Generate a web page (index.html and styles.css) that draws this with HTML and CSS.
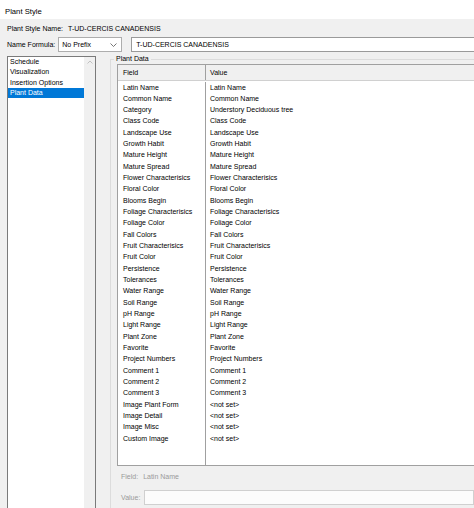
FILE: index.html
```html
<!DOCTYPE html>
<html lang="en">
<head>
    <meta charset="UTF-8">
    <meta name="viewport" content="width=device-width, initial-scale=1.0">
    <title>Plant Style</title>
    <link rel="stylesheet" href="styles.css">
</head>
<body>
    <div class="titlebar">Plant Style</div>

    <div class="dialog">
        <div class="name-row">
            <span>Plant Style Name:</span>
            <span class="name-value">T-UD-CERCIS CANADENSIS</span>
        </div>

        <div class="formula-row">
            <label for="formula">Name Formula:</label>
            <div class="combo" id="formula">
                <span>No Prefix</span>
                <svg width="7" height="4" viewBox="0 0 7 4"><polyline points="0.5,0.5 3.5,3.5 6.5,0.5" fill="none" stroke="#555" stroke-width="0.8"/></svg>
            </div>
            <div class="textbox">T-UD-CERCIS CANADENSIS</div>
        </div>

        <div class="main">
            <div class="listbox">
                <ul class="list">
                    <li>Schedule</li>
                    <li>Visualization</li>
                    <li>Insertion Options</li>
                    <li class="selected">Plant Data</li>
                </ul>
                <div class="scrollbar">
                    <svg width="6" height="4" viewBox="0 0 6 4"><polyline points="0.5,3.5 3,1 5.5,3.5" fill="none" stroke="#b5b5b5" stroke-width="0.8"/></svg>
                </div>
            </div>

            <fieldset class="group">
                <legend>Plant Data</legend>

                <div class="grid">
                    <div class="grid-head">
                        <div class="col-field">Field</div>
                        <div class="col-value">Value</div>
                    </div>
                    <div class="grid-body">
                        <div class="col-field" id="fields"></div>
                        <div class="col-value" id="values"></div>
                    </div>
                </div>

                <div class="detail">Field:<span class="detail-value">Latin Name</span></div>
                <div class="value-row">
                    <span>Value:</span>
                    <div class="textbox disabled"></div>
                </div>
            </fieldset>
        </div>
    </div>

    <script>
        const rows = [
            ['Latin Name', 'Latin Name'],
            ['Common Name', 'Common Name'],
            ['Category', 'Understory Deciduous tree'],
            ['Class Code', 'Class Code'],
            ['Landscape Use', 'Landscape Use'],
            ['Growth Habit', 'Growth Habit'],
            ['Mature Height', 'Mature Height'],
            ['Mature Spread', 'Mature Spread'],
            ['Flower Characterisics', 'Flower Characterisics'],
            ['Floral Color', 'Floral Color'],
            ['Blooms Begin', 'Blooms Begin'],
            ['Foliage Characterisics', 'Foliage Characterisics'],
            ['Foliage Color', 'Foliage Color'],
            ['Fall Colors', 'Fall Colors'],
            ['Fruit Characterisics', 'Fruit Characterisics'],
            ['Fruit Color', 'Fruit Color'],
            ['Persistence', 'Persistence'],
            ['Tolerances', 'Tolerances'],
            ['Water Range', 'Water Range'],
            ['Soil Range', 'Soil Range'],
            ['pH Range', 'pH Range'],
            ['Light Range', 'Light Range'],
            ['Plant Zone', 'Plant Zone'],
            ['Favorite', 'Favorite'],
            ['Project Numbers', 'Project Numbers'],
            ['Comment 1', 'Comment 1'],
            ['Comment 2', 'Comment 2'],
            ['Comment 3', 'Comment 3'],
            ['Image Plant Form', '<not set>'],
            ['Image Detail', '<not set>'],
            ['Image Misc', '<not set>'],
            ['Custom Image', '<not set>']
        ];

        const fields = document.getElementById('fields');
        const values = document.getElementById('values');
        rows.forEach(function (row) {
            const f = document.createElement('div');
            f.className = 'cell';
            f.textContent = row[0];
            fields.appendChild(f);

            const v = document.createElement('div');
            v.className = 'cell';
            v.textContent = row[1];
            values.appendChild(v);
        });
    </script>
</body>
</html>
```

FILE: styles.css
```css
body {
    margin: 0;
    width: 474px;
    height: 508px;
    overflow: hidden;
    background-color: #f0f0f0;
    font-family: "Liberation Sans", Arial, sans-serif;
    font-size: 7px;
    color: #000;
}
.titlebar {
    background-color: #fff;
    height: 17px;
    padding: 3px 0 0 5px;
    line-height: 17px;
    font-size: 7.7px;
    height: 16px;
}
.dialog {
    padding-left: 7px;
}
.name-row {
    margin-top: 4px;
    height: 12px;
    line-height: 12px;
    display: flex;
    white-space: nowrap;
}
.name-value {
    margin-left: 5px;
}
.formula-row {
    margin-top: 2px;
    height: 15px;
    display: flex;
    align-items: center;
    white-space: nowrap;
}
.formula-row label {
    flex: none;
}
.combo {
    flex: none;
    margin-left: 3px;
    width: 64px;
    height: 15px;
    box-sizing: border-box;
    border: 1px solid #adadad;
    background-color: #fff;
    padding: 0 4px 0 3px;
    display: flex;
    align-items: center;
    justify-content: space-between;
}
.textbox {
    flex: none;
    height: 15px;
    box-sizing: border-box;
    border: 1px solid #9a9a9a;
    background-color: #fff;
    line-height: 13px;
}
.formula-row .textbox {
    margin-left: 9px;
    width: 360px;
    padding-left: 4px;
}
.main {
    margin-top: 2px;
    display: flex;
    align-items: flex-start;
}
.listbox {
    flex: none;
    margin-top: 2px;
    width: 89px;
    height: 460px;
    box-sizing: border-box;
    border: 1px solid #7a7a7a;
    background-color: #fff;
    display: flex;
}
.list {
    flex: 1;
    margin: 0;
    padding: 0;
    list-style: none;
}
.list li {
    line-height: 10.33px;
    padding-left: 2px;
}
.list li.selected {
    background-color: #0078d7;
    color: #fff;
}
.scrollbar {
    width: 11px;
    background-color: #f0f0f0;
    display: flex;
    justify-content: center;
    align-items: flex-start;
    padding-top: 3px;
}
.group {
    flex: none;
    margin: 0 0 0 14px;
    padding: 0 0 0 6px;
    border: 1px solid #dcdcdc;
    width: 380px;
    height: 470px;
    box-sizing: border-box;
    min-width: 0;
}
.group legend {
    margin-left: -3px;
    padding: 0 2px;
    line-height: 10px;
}
.grid {
    width: 370px;
    height: 402px;
    box-sizing: border-box;
    border: 1px solid #a0a0a0;
    background-color: #fff;
    display: flex;
    flex-direction: column;
}
.grid-head {
    height: 16px;
    box-sizing: border-box;
    border-bottom: 1px solid #d0d0d0;
    background-color: #f0f0f0;
    line-height: 15px;
    display: flex;
}
.grid-body {
    flex: 1;
    display: flex;
    padding-top: 0.5px;
}
.col-field {
    flex: none;
    width: 88px;
    border-right: 1px solid #a0a0a0;
    padding-left: 5px;
    box-sizing: border-box;
}
.col-value {
    padding-left: 4px;
}
.cell {
    line-height: 11.33px;
    white-space: nowrap;
}
.detail {
    margin-top: 6px;
    line-height: 10px;
    padding-left: 4px;
    color: #9a9a9a;
}
.detail-value {
    margin-left: 5px;
}
.value-row {
    margin-top: 8px;
    height: 15px;
    padding-left: 4px;
    display: flex;
    align-items: center;
    color: #9a9a9a;
}
.textbox.disabled {
    margin-left: 4px;
    width: 330px;
    border-color: #d0d0d0;
    background-color: #fcfcfc;
}
```
